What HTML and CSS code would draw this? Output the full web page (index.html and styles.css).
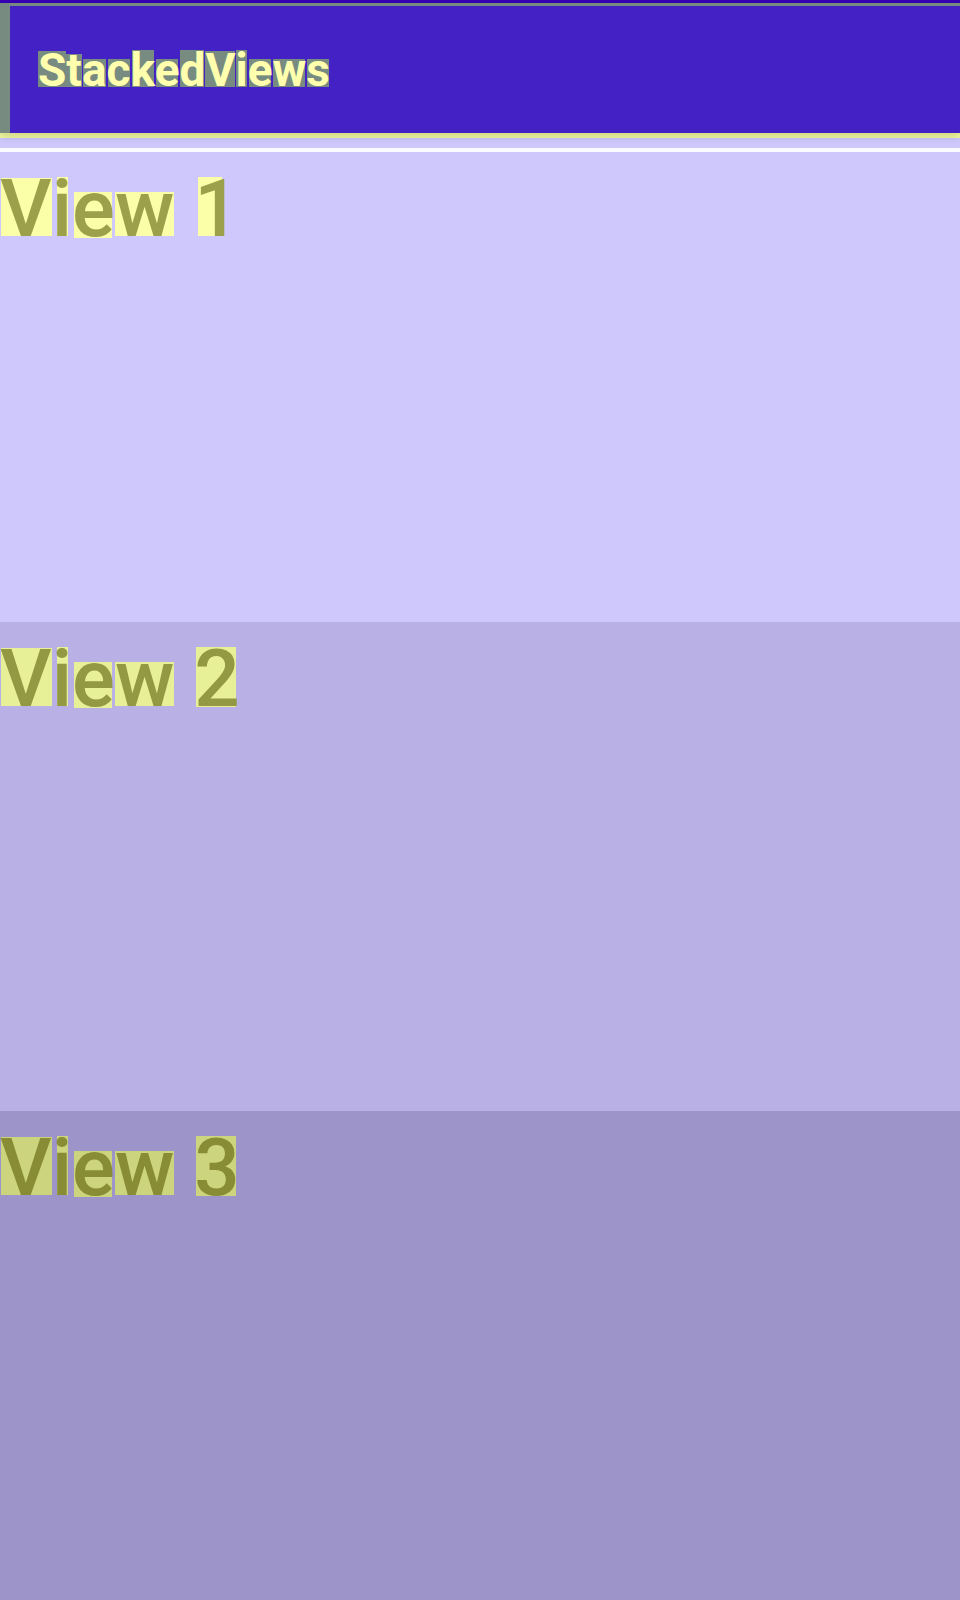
FILE: index.html
```
<!DOCTYPE html>
<html lang="en">
<head>
    <meta charset="UTF-8">
    <meta name="viewport" content="width=device-width, initial-scale=1.0">
    <title>StackedViews</title>
    <link rel="stylesheet" href="styles.css">
</head>
<body>
    <header class="app-bar">
        <h1 class="title"><span class="cap">S</span><span class="mid">t</span><span class="low">a</span><span class="low">c</span><span class="tall">k</span><span class="low">e</span><span class="tall">d</span><span class="cap">V</span><span class="tall">i</span><span class="low">e</span><span class="low">w</span><span class="low">s</span></h1>
    </header>
    <main class="stack">
        <section class="view view-1">
            <div class="stripe"></div>
            <div class="divider"></div>
            <h2 class="label"><span class="cap">V</span><span class="dot">i</span><span class="low">e</span><span class="wide">w</span> <span class="one">1</span></h2>
        </section>
        <section class="view view-2">
            <h2 class="label"><span class="cap">V</span><span class="dot">i</span><span class="low">e</span><span class="wide">w</span> <span class="digit">2</span></h2>
        </section>
        <section class="view view-3">
            <h2 class="label"><span class="cap">V</span><span class="dot">i</span><span class="low">e</span><span class="wide">w</span> <span class="digit">3</span></h2>
        </section>
    </main>
</body>
</html>
```
FILE: styles.css
```
* {
    box-sizing: border-box;
}
body {
    margin: 0;
    min-height: 100vh;
    display: flex;
    flex-direction: column;
    font-family: Roboto, sans-serif;
    background-color: #3700b3;
}
.app-bar {
    position: relative;
    margin-top: 3px;
    padding: 36px 0 35px 28px;
    background-color: #4321c5;
    border-top: 3px solid #788b81;
    border-left: 10px solid #788b81;
    box-shadow: 0 4px 8px rgba(0, 0, 0, 0.15);
}
.title, .label {
    margin: 0;
    white-space: nowrap;
}
.title {
    font-size: 46px;
    line-height: 56px;
    font-weight: 700;
    color: #ffffae;
    --box: #788b81;
}
.stack {
    flex: 1;
    display: flex;
    flex-direction: column;
}
.view {
    flex: 1 0 0;
}
.label {
    padding-top: 10px;
    font-size: 80px;
    line-height: 94px;
    font-weight: 500;
}
.view-1 {
    background-color: #cfc8fd;
    color: #9ca04a;
    --box: #faffa8;
}
.view-2 {
    background-color: #b9b0e5;
    color: #939842;
    --box: #e7f097;
}
.view-3 {
    background-color: #9d94c9;
    color: #888d35;
    --box: #ccd57d;
}
.stripe {
    height: 5px;
    background-color: #f4fba0;
}
.divider {
    margin-top: 10px;
    height: 4px;
    background-color: #fcfbff;
}

/* highlight box behind each letter */
.title span, .label span {
    background-image: linear-gradient(var(--box), var(--box));
    background-repeat: no-repeat;
}
.title .cap {
    background-size: 100% 36px;
    background-position: 0 8px;
}
.title .mid {
    background-size: 100% 33px;
    background-position: 0 11px;
}
.title .low {
    background-size: calc(100% - 2px) 28px;
    background-position: 1px 16px;
}
.title .tall {
    background-size: calc(100% - 2px) 37px;
    background-position: 1px 7px;
}
.label .cap {
    background-size: 51px 58px;
    background-position: 1px 16px;
}
.label .dot {
    background-size: 11px 59px;
    background-position: 5px 15px;
}
.label .low {
    background-size: 38px 46px;
    background-position: 2px 30px;
}
.label .wide {
    background-size: 60px 44px;
    background-position: 0 30px;
}
.label .one {
    background-size: 24px 59px;
    background-position: 4px 15px;
}
.label .digit {
    background-size: 40px 60px;
    background-position: 2px 15px;
}
```
